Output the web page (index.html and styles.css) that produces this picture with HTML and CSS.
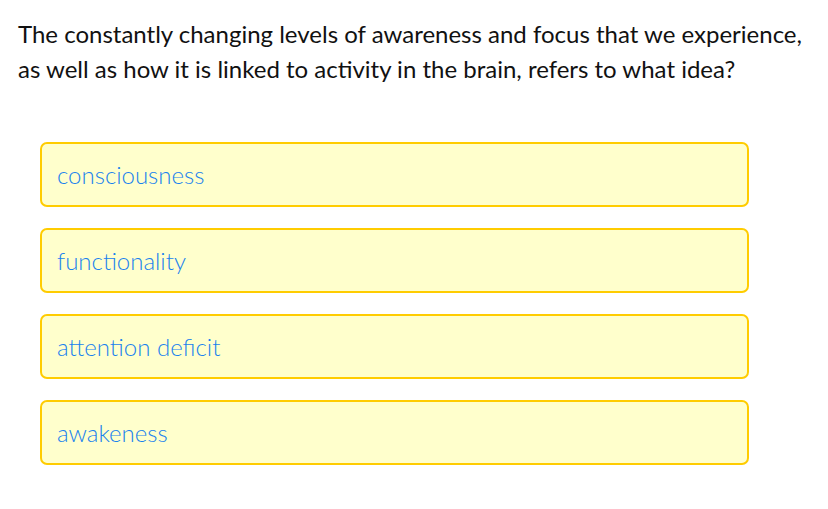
FILE: index.html
```html
<!DOCTYPE html>
<html>
<head>
<meta charset="utf-8">
<link rel="stylesheet" href="styles.css">
</head>
<body>
<div class="quiz">
  <p class="question">The constantly changing levels of awareness and focus that we experience, as well as how it is linked to activity in the brain, refers to what idea?</p>
  <ul class="options">
    <li class="option">consciousness</li>
    <li class="option">functionality</li>
    <li class="option">attention deficit</li>
    <li class="option">awakeness</li>
  </ul>
</div>
</body>
</html>
```
FILE: styles.css
```css
html, body {
  margin: 0;
  padding: 0;
  background: #ffffff;
}
.quiz {
  padding: 16px 18px 0 18px;
  font-family: Lato, "Open Sans", sans-serif;
}
.question {
  margin: 0;
  width: 792px;
  font-size: 24px;
  line-height: 35px;
  color: #111111;
}
.options {
  list-style: none;
  margin: 56px 0 0 22px;
  padding: 0;
  width: 709px;
  display: flex;
  flex-direction: column;
  gap: 21px;
}
.option {
  box-sizing: border-box;
  height: 65px;
  border: 2px solid #ffcc00;
  border-radius: 7px;
  background: #ffffcc;
  color: #1a82ee;
  font-weight: 300;
  font-size: 24px;
  padding: 0 15px;
  display: flex;
  align-items: center;
}
```
